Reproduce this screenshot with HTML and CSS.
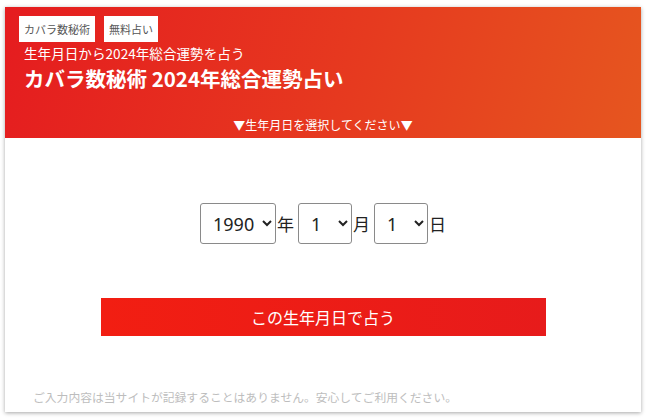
FILE: index.html
```html
<!DOCTYPE html>
<html lang="ja">
<head>
<meta charset="utf-8">
<link rel="stylesheet" href="styles.css">
</head>
<body>
<div class="card">
  <header class="hero">
    <div class="tags">
      <span class="tag">カバラ数秘術</span>
      <span class="tag">無料占い</span>
    </div>
    <p class="sub">生年月日から2024年総合運勢を占う</p>
    <h1 class="title">カバラ数秘術 2024年総合運勢占い</h1>
    <p class="prompt">▼生年月日を選択してください▼</p>
  </header>
  <main class="body">
    <div class="dates">
      <select class="sel sel-year"><option>1990</option></select><span class="unit">年</span>
      <select class="sel sel-md"><option>1</option></select><span class="unit">月</span>
      <select class="sel sel-md"><option>1</option></select><span class="unit last">日</span>
    </div>
    <button class="go">この生年月日で占う</button>
    <p class="note">ご入力内容は当サイトが記録することはありません。安心してご利用ください。</p>
  </main>
</div>
</body>
</html>
```
FILE: styles.css
```css
html, body { margin: 0; padding: 0; background: #fff; }
body { font-family: "Noto Sans CJK JP", "Noto Sans", sans-serif; }
.card {
  margin: 7px 9px 7px 5px;
  width: 636px;
  height: 405px;
  box-shadow: 0 1px 4px rgba(0,0,0,0.35);
  background: #fff;
  display: flex;
  flex-direction: column;
}
.hero {
  height: 131px;
  box-sizing: border-box;
  padding: 9px 14px 0;
  background: linear-gradient(105deg, #e51c1f 0%, #e63a1f 55%, #e6561f 100%);
  color: #fff;
}
.tags { display: flex; gap: 9px; }
.tag {
  background: #fff;
  color: #555;
  font-size: 11px;
  line-height: 26px;
  height: 26px;
  padding: 0 5px;
}
.sub { margin: 3px 0 0 5px; font-size: 13.6px; line-height: 16px; }
.title { margin: 4px 0 0 5px; font-size: 20.5px; line-height: 26px; font-weight: 700; }
.prompt { margin: 26px 0 0; text-align: center; font-size: 12px; line-height: 16px; }
.body {
  flex: 1;
  display: flex;
  flex-direction: column;
  align-items: center;
}
.dates {
  margin-top: 65px;
  display: flex;
  align-items: center;
  font-size: 17px;
  color: #222;
}
.sel {
  height: 41px;
  font-size: 18px;
  font-family: "Noto Sans", sans-serif;
  border: 1px solid #8a8a8a;
  border-radius: 3px;
  background: #fff;
  color: #222;
  padding: 0 4px 0 8px;
}
.sel-year { width: 76px; }
.sel-md { width: 54px; }
.unit { margin: 0 4px 0 1px; }
.unit.last { margin-right: 0; }
.go {
  margin-top: 54px;
  width: 445px;
  height: 38px;
  border: none;
  background: linear-gradient(90deg, #f21e12, #e71b1b);
  color: #fff;
  font-family: inherit;
  font-size: 16px;
}
.note {
  margin: 52px 0 0;
  align-self: flex-start;
  padding-left: 28px;
  font-size: 11.8px;
  color: #bdbdbd;
}
```
